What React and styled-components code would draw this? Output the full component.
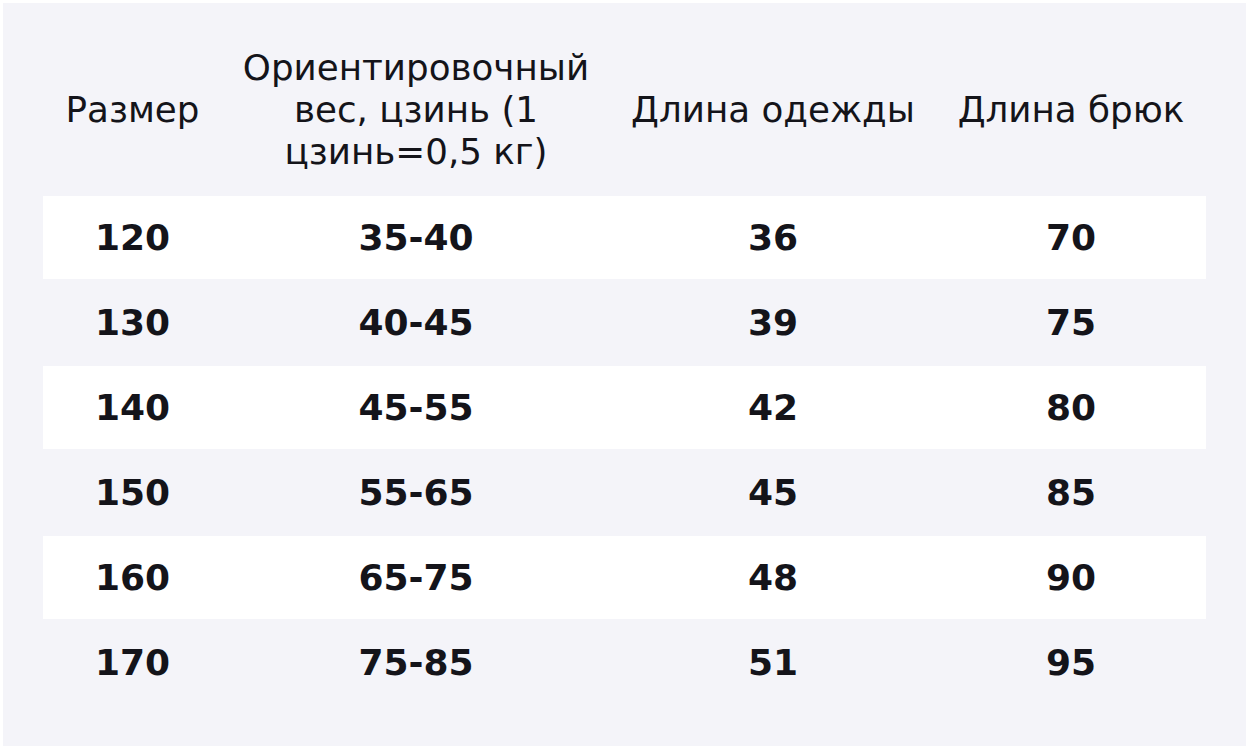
import React from "react";
import styled, { createGlobalStyle } from "styled-components";

const Global = createGlobalStyle`
  html, body { margin: 0; padding: 0; background: #ffffff; }
  body { font-family: "DejaVu Sans", "Noto Sans", sans-serif; }
`;

const Page = styled.div`
  padding: 3px;
`;

const Panel = styled.div`
  width: 1243px;
  height: 743px;
  box-sizing: border-box;
  padding: 40px;
  background: #f4f4f9;
  color: #14141a;
`;

const Grid = styled.div`
  display: grid;
  grid-template-columns: 179px 388px 326px 270px;
`;

const HeadRow = styled(Grid)`
  height: 153px;
  box-sizing: border-box;
  padding: 4px 0 23px;
`;

const HeadCell = styled.div`
  display: flex;
  align-items: center;
  justify-content: center;
  text-align: center;
  font-size: 35.7px;
  line-height: 42px;
  font-weight: 400;
  white-space: nowrap;
`;

const Row = styled(Grid)`
  height: 83px;
  margin-bottom: 2px;
  background: ${(p) => (p.$striped ? "#ffffff" : "transparent")};
`;

const Cell = styled.div`
  display: flex;
  align-items: center;
  justify-content: center;
  font-size: 36px;
  line-height: 42px;
  font-weight: 700;
`;

const rows = [
  ["120", "35-40", "36", "70"],
  ["130", "40-45", "39", "75"],
  ["140", "45-55", "42", "80"],
  ["150", "55-65", "45", "85"],
  ["160", "65-75", "48", "90"],
  ["170", "75-85", "51", "95"],
];

export default function App() {
  return (
    <Page>
      <Global />
      <Panel>
        <HeadRow>
          <HeadCell>Размер</HeadCell>
          <HeadCell>
            Ориентировочный
            <br />
            вес, цзинь (1
            <br />
            цзинь=0,5 кг)
          </HeadCell>
          <HeadCell>Длина одежды</HeadCell>
          <HeadCell>Длина брюк</HeadCell>
        </HeadRow>
        {rows.map((r, i) => (
          <Row key={r[0]} $striped={i % 2 === 0}>
            {r.map((v, j) => (
              <Cell key={j}>{v}</Cell>
            ))}
          </Row>
        ))}
      </Panel>
    </Page>
  );
}
